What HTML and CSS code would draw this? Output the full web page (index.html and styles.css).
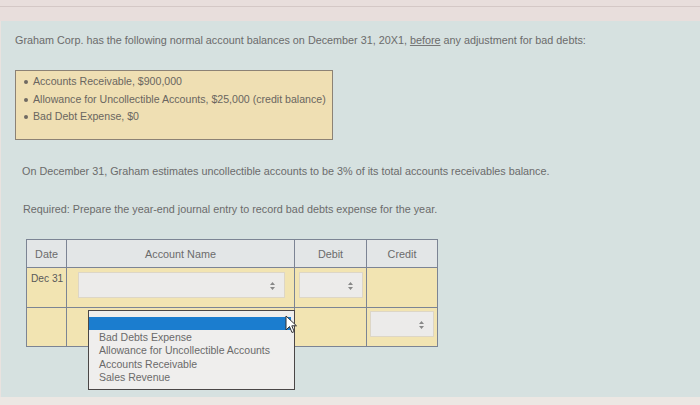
FILE: index.html
```html
<!DOCTYPE html>
<html>
<head>
<meta charset="utf-8">
<link rel="stylesheet" href="styles.css">
</head>
<body>
<div class="topbar"><div class="topline"></div></div>
<div class="panel">
  <p class="intro">Graham Corp. has the following normal account balances on December 31, 20X1, <u>before</u> any adjustment for bad debts:</p>
  <ul class="balances">
    <li>Accounts Receivable, $900,000</li>
    <li>Allowance for Uncollectible Accounts, $25,000 (credit balance)</li>
    <li>Bad Debt Expense, $0</li>
  </ul>
  <p class="estimate">On December 31, Graham estimates uncollectible accounts to be 3% of its total accounts receivables balance.</p>
  <p class="required">Required: Prepare the year-end journal entry to record bad debts expense for the year.</p>
  <div class="table-wrap">
    <table class="journal">
      <thead>
        <tr class="head">
          <th class="c-date">Date</th>
          <th class="c-acct">Account Name</th>
          <th class="c-debit">Debit</th>
          <th class="c-credit">Credit</th>
        </tr>
      </thead>
      <tbody>
        <tr class="row1">
          <td class="date">Dec 31</td>
          <td><div class="sel sel-acct"><svg class="arr" width="5" height="8" viewBox="0 0 5 8"><path d="M2.5 0 L5 3 L0 3 Z M2.5 8 L5 5 L0 5 Z" fill="#888"/></svg></div></td>
          <td><div class="sel sel-num"><svg class="arr" width="5" height="8" viewBox="0 0 5 8"><path d="M2.5 0 L5 3 L0 3 Z M2.5 8 L5 5 L0 5 Z" fill="#888"/></svg></div></td>
          <td></td>
        </tr>
        <tr class="row2">
          <td></td>
          <td></td>
          <td></td>
          <td><div class="sel sel-num sel-credit"><svg class="arr" width="5" height="8" viewBox="0 0 5 8"><path d="M2.5 0 L5 3 L0 3 Z M2.5 8 L5 5 L0 5 Z" fill="#888"/></svg></div></td>
        </tr>
      </tbody>
    </table>
    <div class="dropdown">
      <div class="hl"></div>
      <div class="opt">Bad Debts Expense</div>
      <div class="opt">Allowance for Uncollectible Accounts</div>
      <div class="opt">Accounts Receivable</div>
      <div class="opt">Sales Revenue</div>
    </div>
    <svg class="cursor" width="14" height="20" viewBox="0 0 14 20"><path d="M1 1 L1 15 L4.5 11.5 L7 17.5 L9.2 16.6 L6.8 10.8 L11.5 10.8 Z" fill="#fff" stroke="#333" stroke-width="1" stroke-linejoin="round"/></svg>
  </div>
</div>
<div class="bottombar"></div>
</body>
</html>
```

FILE: styles.css
```css
html, body {
  margin: 0;
  padding: 0;
  background: #e9e2df;
  font-family: "Liberation Sans", Arial, sans-serif;
  color: #6b6b6b;
  font-size: 10.8px;
  width: 700px;
  height: 405px;
  overflow: hidden;
}

.topbar {
  height: 21px;
  background: #e8dedc;
}

.topline {
  height: 6px;
  border-bottom: 1px solid #d4c8c6;
}

.panel {
  height: 376px;
  background: #d6e1e0;
  padding: 0 0 0 14px;
  box-sizing: border-box;
  margin-left: 1px;
  overflow: hidden;
}

.intro {
  margin: 0;
  padding-top: 12px;
  line-height: 14px;
}

.intro u {
  text-decoration-color: #777;
}

.balances {
  list-style: none;
  margin: 23px 0 0 0;
  padding: 2px 0 0 8px;
  width: 318px;
  height: 70px;
  box-sizing: border-box;
  background: #efdfb3;
  border: 1px solid #8c8275;
  line-height: 17.5px;
  color: #6a6660;
  font-size: 10.6px;
}

.balances li {
  position: relative;
  padding-left: 9px;
}

.balances li::before {
  content: "";
  position: absolute;
  left: 0;
  top: 7px;
  width: 4px;
  height: 4px;
  border-radius: 50%;
  background: #6f6a62;
}

.estimate {
  margin: 24px 0 0 7px;
  line-height: 14px;
}

.required {
  margin: 24px 0 0 8px;
  line-height: 14px;
}

.table-wrap {
  position: relative;
  margin: 23px 0 0 11px;
  width: 412px;
}

.journal {
  border-collapse: collapse;
  table-layout: fixed;
  font-size: 10.8px;
}

.journal th, .journal td {
  border: 1px solid #7c8494;
  padding: 0;
}

.journal th {
  background: #e3e6e7;
  font-weight: normal;
  color: #6b6b6b;
  text-align: center;
}

.head { height: 28px; }
.row1 { height: 40px; }
.row2 { height: 39px; }

.c-date { width: 39px; }
.c-acct { width: 227px; }
.c-debit { width: 71px; }
.c-credit { width: 70px; }

.journal td {
  background: #f2e4b2;
  vertical-align: top;
}

.journal td.date {
  padding: 5px 0 0 4px;
  color: #5a5a5a;
  font-size: 10.2px;
  white-space: nowrap;
}

.sel {
  position: relative;
  margin: 4px 4px 0 5px;
  height: 26px;
  box-sizing: border-box;
  background: #ecebea;
  border: 1px solid #ddd6c6;
}

.sel-acct { margin-left: 11px; margin-right: 9px; }
.sel-num { margin-left: 4px; margin-right: 3px; }
.sel-credit { margin-top: 3px; margin-left: 3px; }

.arr {
  position: absolute;
  right: 9px;
  top: 9px;
}

.dropdown {
  position: absolute;
  left: 62px;
  top: 71px;
  width: 207px;
  height: 80px;
  box-sizing: border-box;
  background: #efeeed;
  border: 1px solid #4a4646;
  padding-top: 6px;
  color: #6a6a6a;
  font-size: 10.5px;
}

.hl {
  height: 13px;
  background: #1b7dcf;
  margin-right: 3px;
  margin-bottom: 1px;
}

.opt {
  padding-left: 10px;
  line-height: 13.4px;
}

.cursor {
  position: absolute;
  left: 259px;
  top: 76px;
}

.bottombar {
  height: 8px;
  background: #ece7e3;
}
```
